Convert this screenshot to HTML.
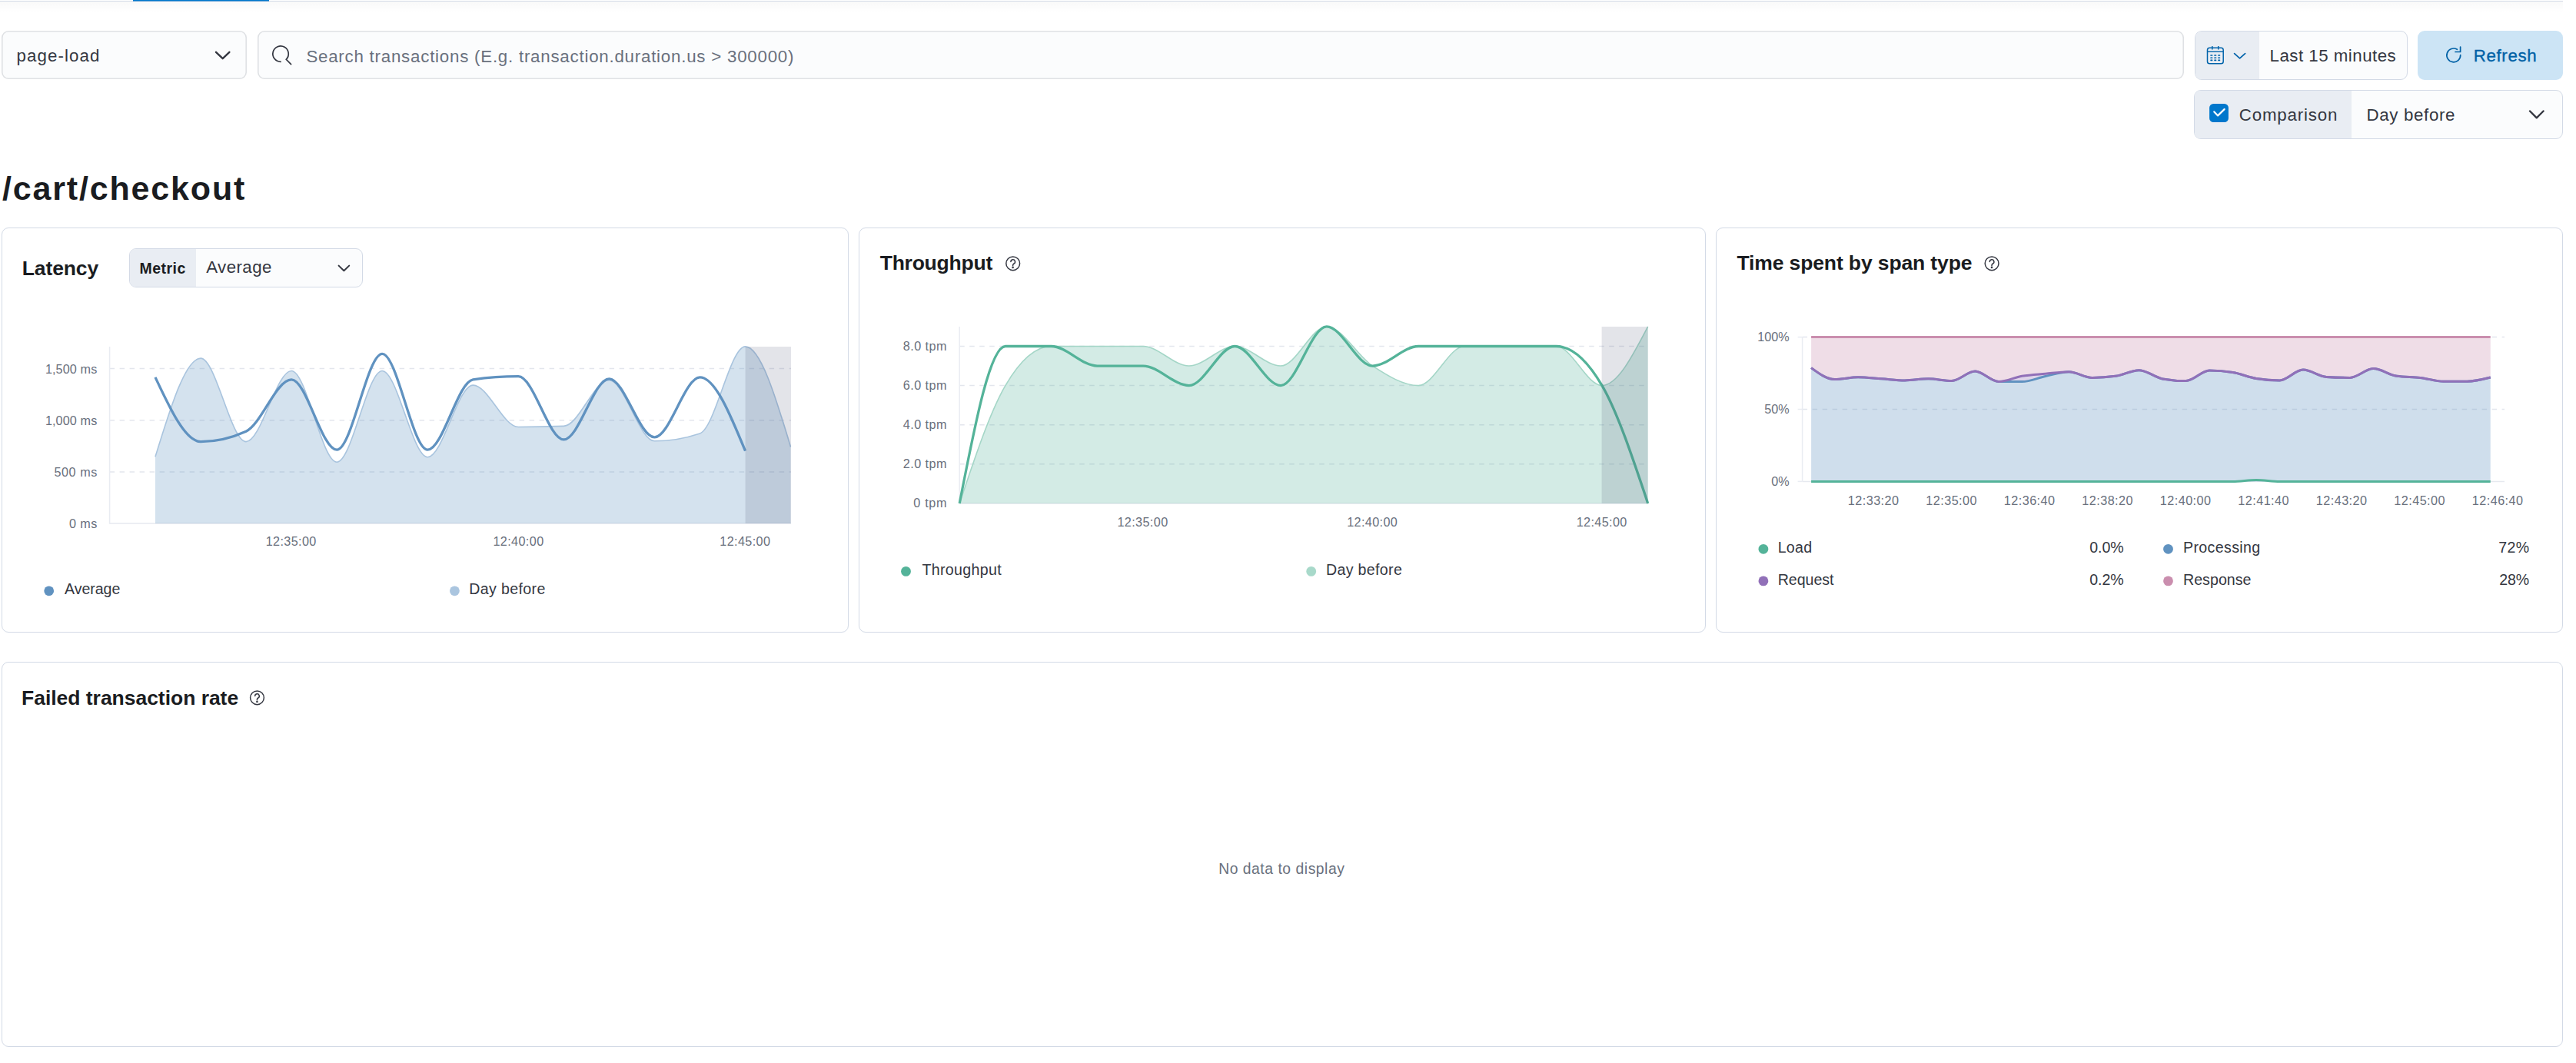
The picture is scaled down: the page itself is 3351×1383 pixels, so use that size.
<!DOCTYPE html>
<html><head><meta charset="utf-8"><title>/cart/checkout</title>
<style>
html,body{margin:0;padding:0;}
body{width:3351px;height:1383px;position:relative;overflow:hidden;background:#fff;font-family:"Liberation Sans",sans-serif;}
.t{position:absolute;white-space:nowrap;}
.b{position:absolute;box-sizing:border-box;}
.ctl{background:#FBFCFD;box-shadow:inset 0 0 0 1.6px rgba(40,46,60,0.13);border-radius:9px;}
.card{background:#fff;border:1px solid #D3DAE6;border-radius:9px;}
svg{position:absolute;left:0;top:0;}
</style></head><body>
<div class="b" style="left:0;top:2px;width:3334px;height:14px;background:linear-gradient(rgba(0,0,0,0.025),rgba(0,0,0,0));"></div>
<div class="b" style="left:0;top:1px;width:3334px;height:1px;background:#D3DAE6;"></div>
<div class="b" style="left:173px;top:0;width:177px;height:1px;background:#0077CC;"></div><div class="b" style="left:173px;top:1px;width:177px;height:1px;background:#5C9BD1;"></div>

<div class="b ctl" style="left:2px;top:40px;width:319px;height:63px;"></div>
<div class="b ctl" style="left:335px;top:40px;width:2506px;height:63px;"></div>

<div class="b" style="left:2855px;top:40px;width:277px;height:64px;border-radius:9px;background:#FBFCFD;border:1px solid #D3DAE6;overflow:hidden;">
  <div class="b" style="left:0;top:0;width:83px;height:62px;background:#E9EDF3;"></div>
</div>
<div class="b" style="left:3145px;top:40px;width:189px;height:64px;border-radius:9px;background:#CCE4F5;"></div>
<div class="b" style="left:2854px;top:117px;width:480px;height:64px;border-radius:9px;background:#FBFCFD;border:1px solid #D3DAE6;overflow:hidden;">
  <div class="b" style="left:0;top:0;width:204px;height:62px;background:#E9EDF3;"></div>
</div>

<div class="b card" style="left:2px;top:296px;width:1102px;height:527px;"></div>
<div class="b card" style="left:1117px;top:296px;width:1102px;height:527px;"></div>
<div class="b card" style="left:2232px;top:296px;width:1102px;height:527px;"></div>
<div class="b card" style="left:2px;top:861px;width:3332px;height:501px;"></div>

<div class="b" style="left:168px;top:323px;width:304px;height:51px;border-radius:9px;background:#FBFCFD;border:1px solid #D3DAE6;overflow:hidden;">
  <div class="b" style="left:0;top:0;width:86px;height:49px;background:#E9EDF3;"></div>
</div>

<svg width="3351" height="1383" viewBox="0 0 3351 1383">
<line x1="142.6" y1="479.5" x2="1029" y2="479.5" stroke="#E3E6ED" stroke-width="1.5" stroke-dasharray="6.5 6.5" stroke-linecap="butt"/>
<line x1="142.6" y1="546.8" x2="1029" y2="546.8" stroke="#E3E6ED" stroke-width="1.5" stroke-dasharray="6.5 6.5" stroke-linecap="butt"/>
<line x1="142.6" y1="613.9" x2="1029" y2="613.9" stroke="#E3E6ED" stroke-width="1.5" stroke-dasharray="6.5 6.5" stroke-linecap="butt"/>
<line x1="142.6" y1="681.0" x2="1029" y2="681.0" stroke="#E6E9EF" stroke-width="1.5" stroke-linecap="butt"/>
<line x1="142.6" y1="451" x2="142.6" y2="681.75" stroke="#E9ECF2" stroke-width="1.5" stroke-linecap="butt"/>
<path d="M202.00,594.30C221.68,530.20 241.36,466.10 261.04,466.10C280.72,466.10 300.40,574.60 320.08,574.60C339.76,574.60 359.44,482.50 379.12,482.50C398.80,482.50 418.48,601.20 438.16,601.20C457.84,601.20 477.52,482.50 497.20,482.50C516.88,482.50 536.56,594.70 556.24,594.70C575.92,594.70 595.60,501.10 615.28,501.10C634.96,501.10 654.64,555.50 674.32,555.50C694.00,555.50 713.68,555.13 733.36,554.40C753.04,553.67 772.72,494.70 792.40,494.70C812.08,494.70 831.76,573.80 851.44,573.80C871.12,573.80 890.80,570.50 910.48,563.90C930.16,557.30 949.84,450.90 969.52,450.90C989.20,450.90 1008.88,516.15 1028.56,581.40L1028.56,681.0L202.0,681.0Z" fill="#6092C0" fill-opacity="0.27"/>
<path d="M202.00,594.30C221.68,530.20 241.36,466.10 261.04,466.10C280.72,466.10 300.40,574.60 320.08,574.60C339.76,574.60 359.44,482.50 379.12,482.50C398.80,482.50 418.48,601.20 438.16,601.20C457.84,601.20 477.52,482.50 497.20,482.50C516.88,482.50 536.56,594.70 556.24,594.70C575.92,594.70 595.60,501.10 615.28,501.10C634.96,501.10 654.64,555.50 674.32,555.50C694.00,555.50 713.68,555.13 733.36,554.40C753.04,553.67 772.72,494.70 792.40,494.70C812.08,494.70 831.76,573.80 851.44,573.80C871.12,573.80 890.80,570.50 910.48,563.90C930.16,557.30 949.84,450.90 969.52,450.90C989.20,450.90 1008.88,516.15 1028.56,581.40" fill="none" stroke="#A9C4DE" stroke-width="1.6"/>
<path d="M202.00,490.90C221.68,532.75 241.36,574.60 261.04,574.60C280.72,574.60 300.40,570.13 320.08,561.20C339.76,552.27 359.44,493.90 379.12,493.90C398.80,493.90 418.48,585.20 438.16,585.20C457.84,585.20 477.52,460.40 497.20,460.40C516.88,460.40 536.56,585.20 556.24,585.20C575.92,585.20 595.60,496.70 615.28,493.90C634.96,491.10 654.64,489.70 674.32,489.70C694.00,489.70 713.68,571.90 733.36,571.90C753.04,571.90 772.72,492.80 792.40,492.80C812.08,492.80 831.76,568.90 851.44,568.90C871.12,568.90 890.80,490.90 910.48,490.90C930.16,490.90 949.84,538.80 969.52,586.70" fill="none" stroke="#6092C0" stroke-width="3.3" stroke-linejoin="round"/>
<rect x="969.6" y="451" width="59.4" height="230.0" fill="rgba(60,64,100,0.14)"/>
<line x1="1248.2" y1="450.5" x2="2143.7" y2="450.5" stroke="#E3E6ED" stroke-width="1.5" stroke-dasharray="6.5 6.5" stroke-linecap="butt"/>
<line x1="1248.2" y1="501.6" x2="2143.7" y2="501.6" stroke="#E3E6ED" stroke-width="1.5" stroke-dasharray="6.5 6.5" stroke-linecap="butt"/>
<line x1="1248.2" y1="552.7" x2="2143.7" y2="552.7" stroke="#E3E6ED" stroke-width="1.5" stroke-dasharray="6.5 6.5" stroke-linecap="butt"/>
<line x1="1248.2" y1="603.8" x2="2143.7" y2="603.8" stroke="#E3E6ED" stroke-width="1.5" stroke-dasharray="6.5 6.5" stroke-linecap="butt"/>
<line x1="1248.2" y1="654.9" x2="2143.7" y2="654.9" stroke="#E6E9EF" stroke-width="1.5" stroke-linecap="butt"/>
<line x1="1248.2" y1="425.0" x2="1248.2" y2="655.65" stroke="#E9ECF2" stroke-width="1.5" stroke-linecap="butt"/>
<path d="M1248.20,654.90C1268.10,595.28 1288.00,535.67 1307.90,501.60C1327.80,467.53 1347.70,450.50 1367.60,450.50C1387.50,450.50 1407.40,450.50 1427.30,450.50C1447.20,450.50 1467.10,450.50 1487.00,450.50C1506.90,450.50 1526.80,476.05 1546.70,476.05C1566.60,476.05 1586.50,450.50 1606.40,450.50C1626.30,450.50 1646.20,476.05 1666.10,476.05C1686.00,476.05 1705.90,424.95 1725.80,424.95C1745.70,424.95 1765.60,463.28 1785.50,476.05C1805.40,488.83 1825.30,501.60 1845.20,501.60C1865.10,501.60 1885.00,450.50 1904.90,450.50C1924.80,450.50 1944.70,450.50 1964.60,450.50C1984.50,450.50 2004.40,450.50 2024.30,450.50C2044.20,450.50 2064.10,501.60 2084.00,501.60C2103.90,501.60 2123.80,463.27 2143.70,424.95L2143.7,654.9L1248.2,654.9Z" fill="#54B399" fill-opacity="0.26"/>
<path d="M1248.20,654.90C1268.10,595.28 1288.00,535.67 1307.90,501.60C1327.80,467.53 1347.70,450.50 1367.60,450.50C1387.50,450.50 1407.40,450.50 1427.30,450.50C1447.20,450.50 1467.10,450.50 1487.00,450.50C1506.90,450.50 1526.80,476.05 1546.70,476.05C1566.60,476.05 1586.50,450.50 1606.40,450.50C1626.30,450.50 1646.20,476.05 1666.10,476.05C1686.00,476.05 1705.90,424.95 1725.80,424.95C1745.70,424.95 1765.60,463.28 1785.50,476.05C1805.40,488.83 1825.30,501.60 1845.20,501.60C1865.10,501.60 1885.00,450.50 1904.90,450.50C1924.80,450.50 1944.70,450.50 1964.60,450.50C1984.50,450.50 2004.40,450.50 2024.30,450.50C2044.20,450.50 2064.10,501.60 2084.00,501.60C2103.90,501.60 2123.80,463.27 2143.70,424.95" fill="none" stroke="#A4D6C7" stroke-width="1.6"/>
<path d="M1248.20,654.90C1268.10,552.70 1288.00,450.50 1307.90,450.50C1327.80,450.50 1347.70,450.50 1367.60,450.50C1387.50,450.50 1407.40,476.05 1427.30,476.05C1447.20,476.05 1467.10,476.05 1487.00,476.05C1506.90,476.05 1526.80,501.60 1546.70,501.60C1566.60,501.60 1586.50,450.50 1606.40,450.50C1626.30,450.50 1646.20,501.60 1666.10,501.60C1686.00,501.60 1705.90,424.95 1725.80,424.95C1745.70,424.95 1765.60,476.05 1785.50,476.05C1805.40,476.05 1825.30,450.50 1845.20,450.50C1865.10,450.50 1885.00,450.50 1904.90,450.50C1924.80,450.50 1944.70,450.50 1964.60,450.50C1984.50,450.50 2004.40,450.50 2024.30,450.50C2044.20,450.50 2064.10,467.53 2084.00,501.60C2103.90,535.67 2123.80,595.28 2143.70,654.90" fill="none" stroke="#54B399" stroke-width="3.3" stroke-linejoin="round"/>
<rect x="2083.6" y="425.0" width="60.1" height="229.89999999999998" fill="rgba(60,64,100,0.14)"/>
<line x1="2344.6" y1="438.6" x2="3258" y2="438.6" stroke="#E3E6ED" stroke-width="1.5" stroke-dasharray="6.5 6.5" stroke-linecap="butt"/>
<line x1="2344.6" y1="532.5" x2="3258" y2="532.5" stroke="#E3E6ED" stroke-width="1.5" stroke-dasharray="6.5 6.5" stroke-linecap="butt"/>
<line x1="2344.6" y1="626.4" x2="3258" y2="626.4" stroke="#E6E9EF" stroke-width="1.5" stroke-linecap="butt"/>
<line x1="2344.6" y1="438.6" x2="2344.6" y2="626.4" stroke="#E9ECF2" stroke-width="1.5" stroke-linecap="butt"/>
<line x1="2338.6" y1="438.6" x2="2344.6" y2="438.6" stroke="#E9ECF2" stroke-width="1.5" stroke-linecap="butt"/>
<line x1="2338.6" y1="532.5" x2="2344.6" y2="532.5" stroke="#E9ECF2" stroke-width="1.5" stroke-linecap="butt"/>
<line x1="2338.6" y1="626.4" x2="2344.6" y2="626.4" stroke="#E9ECF2" stroke-width="1.5" stroke-linecap="butt"/>
<path d="M2356.1,438.6L3239.73,438.6L3239.73,491.00C3229.57,493.60 3219.42,496.20 3209.26,496.20C3199.10,496.20 3188.95,496.20 3178.79,496.20C3168.63,496.20 3158.48,492.55 3148.32,491.40C3138.16,490.25 3128.01,490.70 3117.85,489.30C3107.69,487.90 3097.54,479.60 3087.38,479.60C3077.22,479.60 3067.07,491.40 3056.91,491.40C3046.75,491.40 3036.60,491.07 3026.44,490.40C3016.28,489.73 3006.13,481.10 2995.97,481.10C2985.81,481.10 2975.66,494.90 2965.50,494.90C2955.34,494.90 2945.19,494.07 2935.03,492.40C2924.87,490.73 2914.72,486.27 2904.56,484.60C2894.40,482.93 2884.25,482.10 2874.09,482.10C2863.93,482.10 2853.78,495.60 2843.62,495.60C2833.46,495.60 2823.31,494.70 2813.15,492.90C2802.99,491.10 2792.84,481.70 2782.68,481.70C2772.52,481.70 2762.37,487.90 2752.21,489.30C2742.05,490.70 2731.90,491.40 2721.74,491.40C2711.58,491.40 2701.43,483.70 2691.27,483.70C2681.11,483.70 2670.96,485.27 2660.80,486.20C2650.64,487.13 2640.49,487.57 2630.33,489.30C2620.17,491.03 2610.02,496.60 2599.86,496.60C2589.70,496.60 2579.55,483.10 2569.39,483.10C2559.23,483.10 2549.08,495.50 2538.92,495.50C2528.76,495.50 2518.61,492.80 2508.45,492.80C2498.29,492.80 2488.14,494.90 2477.98,494.90C2467.82,494.90 2457.67,493.48 2447.51,492.80C2437.35,492.12 2427.20,490.80 2417.04,490.80C2406.88,490.80 2396.73,493.50 2386.57,493.50C2376.41,493.50 2366.26,486.05 2356.10,478.60Z" fill="#CA8EAE" fill-opacity="0.30"/>
<path d="M2356.10,478.60C2366.26,486.05 2376.41,493.50 2386.57,493.50C2396.73,493.50 2406.88,490.80 2417.04,490.80C2427.20,490.80 2437.35,492.12 2447.51,492.80C2457.67,493.48 2467.82,494.90 2477.98,494.90C2488.14,494.90 2498.29,492.80 2508.45,492.80C2518.61,492.80 2528.76,495.50 2538.92,495.50C2549.08,495.50 2559.23,483.10 2569.39,483.10C2579.55,483.10 2589.70,496.60 2599.86,496.60C2610.02,496.60 2620.17,491.03 2630.33,489.30C2640.49,487.57 2650.64,487.13 2660.80,486.20C2670.96,485.27 2681.11,483.70 2691.27,483.70C2701.43,483.70 2711.58,491.40 2721.74,491.40C2731.90,491.40 2742.05,490.70 2752.21,489.30C2762.37,487.90 2772.52,481.70 2782.68,481.70C2792.84,481.70 2802.99,491.10 2813.15,492.90C2823.31,494.70 2833.46,495.60 2843.62,495.60C2853.78,495.60 2863.93,482.10 2874.09,482.10C2884.25,482.10 2894.40,482.93 2904.56,484.60C2914.72,486.27 2924.87,490.73 2935.03,492.40C2945.19,494.07 2955.34,494.90 2965.50,494.90C2975.66,494.90 2985.81,481.10 2995.97,481.10C3006.13,481.10 3016.28,489.73 3026.44,490.40C3036.60,491.07 3046.75,491.40 3056.91,491.40C3067.07,491.40 3077.22,479.60 3087.38,479.60C3097.54,479.60 3107.69,487.90 3117.85,489.30C3128.01,490.70 3138.16,490.25 3148.32,491.40C3158.48,492.55 3168.63,496.20 3178.79,496.20C3188.95,496.20 3199.10,496.20 3209.26,496.20C3219.42,496.20 3229.57,493.60 3239.73,491.00L3239.73,491.00C3229.57,493.60 3219.42,496.20 3209.26,496.20C3199.10,496.20 3188.95,496.20 3178.79,496.20C3168.63,496.20 3158.48,492.55 3148.32,491.40C3138.16,490.25 3128.01,490.70 3117.85,489.30C3107.69,487.90 3097.54,479.60 3087.38,479.60C3077.22,479.60 3067.07,491.40 3056.91,491.40C3046.75,491.40 3036.60,491.07 3026.44,490.40C3016.28,489.73 3006.13,481.10 2995.97,481.10C2985.81,481.10 2975.66,494.90 2965.50,494.90C2955.34,494.90 2945.19,494.07 2935.03,492.40C2924.87,490.73 2914.72,486.27 2904.56,484.60C2894.40,482.93 2884.25,482.10 2874.09,482.10C2863.93,482.10 2853.78,495.60 2843.62,495.60C2833.46,495.60 2823.31,494.70 2813.15,492.90C2802.99,491.10 2792.84,481.70 2782.68,481.70C2772.52,481.70 2762.37,487.90 2752.21,489.30C2742.05,490.70 2731.90,491.40 2721.74,491.40C2711.58,491.40 2701.43,483.70 2691.27,483.70C2681.11,483.70 2670.96,487.35 2660.80,489.50C2650.64,491.65 2640.49,496.60 2630.33,496.60C2620.17,496.60 2610.02,496.60 2599.86,496.60C2589.70,496.60 2579.55,483.10 2569.39,483.10C2559.23,483.10 2549.08,495.50 2538.92,495.50C2528.76,495.50 2518.61,492.80 2508.45,492.80C2498.29,492.80 2488.14,494.90 2477.98,494.90C2467.82,494.90 2457.67,493.48 2447.51,492.80C2437.35,492.12 2427.20,490.80 2417.04,490.80C2406.88,490.80 2396.73,493.50 2386.57,493.50C2376.41,493.50 2366.26,486.05 2356.10,478.60Z" fill="#9170B8" fill-opacity="0.30"/>
<path d="M2356.10,478.60C2366.26,486.05 2376.41,493.50 2386.57,493.50C2396.73,493.50 2406.88,490.80 2417.04,490.80C2427.20,490.80 2437.35,492.12 2447.51,492.80C2457.67,493.48 2467.82,494.90 2477.98,494.90C2488.14,494.90 2498.29,492.80 2508.45,492.80C2518.61,492.80 2528.76,495.50 2538.92,495.50C2549.08,495.50 2559.23,483.10 2569.39,483.10C2579.55,483.10 2589.70,496.60 2599.86,496.60C2610.02,496.60 2620.17,496.60 2630.33,496.60C2640.49,496.60 2650.64,491.65 2660.80,489.50C2670.96,487.35 2681.11,483.70 2691.27,483.70C2701.43,483.70 2711.58,491.40 2721.74,491.40C2731.90,491.40 2742.05,490.70 2752.21,489.30C2762.37,487.90 2772.52,481.70 2782.68,481.70C2792.84,481.70 2802.99,491.10 2813.15,492.90C2823.31,494.70 2833.46,495.60 2843.62,495.60C2853.78,495.60 2863.93,482.10 2874.09,482.10C2884.25,482.10 2894.40,482.93 2904.56,484.60C2914.72,486.27 2924.87,490.73 2935.03,492.40C2945.19,494.07 2955.34,494.90 2965.50,494.90C2975.66,494.90 2985.81,481.10 2995.97,481.10C3006.13,481.10 3016.28,489.73 3026.44,490.40C3036.60,491.07 3046.75,491.40 3056.91,491.40C3067.07,491.40 3077.22,479.60 3087.38,479.60C3097.54,479.60 3107.69,487.90 3117.85,489.30C3128.01,490.70 3138.16,490.25 3148.32,491.40C3158.48,492.55 3168.63,496.20 3178.79,496.20C3188.95,496.20 3199.10,496.20 3209.26,496.20C3219.42,496.20 3229.57,493.60 3239.73,491.00L3239.73,626.4L2356.1,626.4Z" fill="#6092C0" fill-opacity="0.30"/>
<path d="M2356.1,438.6L3239.73,438.6" stroke="#CA8EAE" stroke-width="3"/>
<path d="M2356.10,478.60C2366.26,486.05 2376.41,493.50 2386.57,493.50C2396.73,493.50 2406.88,490.80 2417.04,490.80C2427.20,490.80 2437.35,492.12 2447.51,492.80C2457.67,493.48 2467.82,494.90 2477.98,494.90C2488.14,494.90 2498.29,492.80 2508.45,492.80C2518.61,492.80 2528.76,495.50 2538.92,495.50C2549.08,495.50 2559.23,483.10 2569.39,483.10C2579.55,483.10 2589.70,496.60 2599.86,496.60C2610.02,496.60 2620.17,496.60 2630.33,496.60C2640.49,496.60 2650.64,491.65 2660.80,489.50C2670.96,487.35 2681.11,483.70 2691.27,483.70C2701.43,483.70 2711.58,491.40 2721.74,491.40C2731.90,491.40 2742.05,490.70 2752.21,489.30C2762.37,487.90 2772.52,481.70 2782.68,481.70C2792.84,481.70 2802.99,491.10 2813.15,492.90C2823.31,494.70 2833.46,495.60 2843.62,495.60C2853.78,495.60 2863.93,482.10 2874.09,482.10C2884.25,482.10 2894.40,482.93 2904.56,484.60C2914.72,486.27 2924.87,490.73 2935.03,492.40C2945.19,494.07 2955.34,494.90 2965.50,494.90C2975.66,494.90 2985.81,481.10 2995.97,481.10C3006.13,481.10 3016.28,489.73 3026.44,490.40C3036.60,491.07 3046.75,491.40 3056.91,491.40C3067.07,491.40 3077.22,479.60 3087.38,479.60C3097.54,479.60 3107.69,487.90 3117.85,489.30C3128.01,490.70 3138.16,490.25 3148.32,491.40C3158.48,492.55 3168.63,496.20 3178.79,496.20C3188.95,496.20 3199.10,496.20 3209.26,496.20C3219.42,496.20 3229.57,493.60 3239.73,491.00" fill="none" stroke="#6092C0" stroke-width="3"/>
<path d="M2356.10,478.60C2366.26,486.05 2376.41,493.50 2386.57,493.50C2396.73,493.50 2406.88,490.80 2417.04,490.80C2427.20,490.80 2437.35,492.12 2447.51,492.80C2457.67,493.48 2467.82,494.90 2477.98,494.90C2488.14,494.90 2498.29,492.80 2508.45,492.80C2518.61,492.80 2528.76,495.50 2538.92,495.50C2549.08,495.50 2559.23,483.10 2569.39,483.10C2579.55,483.10 2589.70,496.60 2599.86,496.60C2610.02,496.60 2620.17,491.03 2630.33,489.30C2640.49,487.57 2650.64,487.13 2660.80,486.20C2670.96,485.27 2681.11,483.70 2691.27,483.70C2701.43,483.70 2711.58,491.40 2721.74,491.40C2731.90,491.40 2742.05,490.70 2752.21,489.30C2762.37,487.90 2772.52,481.70 2782.68,481.70C2792.84,481.70 2802.99,491.10 2813.15,492.90C2823.31,494.70 2833.46,495.60 2843.62,495.60C2853.78,495.60 2863.93,482.10 2874.09,482.10C2884.25,482.10 2894.40,482.93 2904.56,484.60C2914.72,486.27 2924.87,490.73 2935.03,492.40C2945.19,494.07 2955.34,494.90 2965.50,494.90C2975.66,494.90 2985.81,481.10 2995.97,481.10C3006.13,481.10 3016.28,489.73 3026.44,490.40C3036.60,491.07 3046.75,491.40 3056.91,491.40C3067.07,491.40 3077.22,479.60 3087.38,479.60C3097.54,479.60 3107.69,487.90 3117.85,489.30C3128.01,490.70 3138.16,490.25 3148.32,491.40C3158.48,492.55 3168.63,496.20 3178.79,496.20C3188.95,496.20 3199.10,496.20 3209.26,496.20C3219.42,496.20 3229.57,493.60 3239.73,491.00" fill="none" stroke="#9170B8" stroke-width="3"/>
<path d="M2356.10,626.40C2366.26,626.40 2376.41,626.40 2386.57,626.40C2396.73,626.40 2406.88,626.40 2417.04,626.40C2427.20,626.40 2437.35,626.40 2447.51,626.40C2457.67,626.40 2467.82,626.40 2477.98,626.40C2488.14,626.40 2498.29,626.40 2508.45,626.40C2518.61,626.40 2528.76,626.40 2538.92,626.40C2549.08,626.40 2559.23,626.40 2569.39,626.40C2579.55,626.40 2589.70,626.40 2599.86,626.40C2610.02,626.40 2620.17,626.40 2630.33,626.40C2640.49,626.40 2650.64,626.40 2660.80,626.40C2670.96,626.40 2681.11,626.40 2691.27,626.40C2701.43,626.40 2711.58,626.40 2721.74,626.40C2731.90,626.40 2742.05,626.40 2752.21,626.40C2762.37,626.40 2772.52,626.40 2782.68,626.40C2792.84,626.40 2802.99,626.40 2813.15,626.40C2823.31,626.40 2833.46,626.40 2843.62,626.40C2853.78,626.40 2863.93,626.40 2874.09,626.40C2884.25,626.40 2894.40,626.40 2904.56,626.40C2914.72,626.40 2924.87,624.40 2935.03,624.40C2945.19,624.40 2955.34,626.40 2965.50,626.40C2975.66,626.40 2985.81,626.40 2995.97,626.40C3006.13,626.40 3016.28,626.40 3026.44,626.40C3036.60,626.40 3046.75,626.40 3056.91,626.40C3067.07,626.40 3077.22,626.40 3087.38,626.40C3097.54,626.40 3107.69,626.40 3117.85,626.40C3128.01,626.40 3138.16,626.40 3148.32,626.40C3158.48,626.40 3168.63,626.40 3178.79,626.40C3188.95,626.40 3199.10,626.40 3209.26,626.40C3219.42,626.40 3229.57,626.40 3239.73,626.40" fill="none" stroke="#54B399" stroke-width="3"/>
<circle cx="63.7" cy="768.8" r="6.4" fill="#6092C0"/>
<circle cx="591.4" cy="768.8" r="6.4" fill="#AAC5DF"/>
<circle cx="1178.5" cy="743.4" r="6.4" fill="#54B399"/>
<circle cx="1705.7" cy="743.4" r="6.4" fill="#A8D9CA"/>
<circle cx="2293.9" cy="714.3" r="6.4" fill="#54B399"/>
<circle cx="2820.5" cy="714.3" r="6.4" fill="#6092C0"/>
<circle cx="2293.9" cy="755.9" r="6.4" fill="#9170B8"/>
<circle cx="2820.5" cy="755.9" r="6.4" fill="#CA8EAE"/>
<polyline points="281,67.8 289.7,76.2 298.4,67.8" fill="none" stroke="#343741" stroke-width="2.4" stroke-linecap="round" stroke-linejoin="round"/>
<polyline points="440.6,345.6 447.4,352.2 454.2,345.6" fill="none" stroke="#343741" stroke-width="2" stroke-linecap="round" stroke-linejoin="round"/>
<polyline points="3291,144.5 3299.8,153.3 3308.6,144.5" fill="none" stroke="#343741" stroke-width="2.4" stroke-linecap="round" stroke-linejoin="round"/>
<polyline points="2906.6,69.6 2913.6,75.9 2920.6,69.6" fill="none" stroke="#0063AA" stroke-width="1.7" stroke-linecap="round" stroke-linejoin="round"/>
<path d="M365.1,80.3 A10.2,10.2 0 1 1 372.3,77.3 L378.6,83.6" fill="none" stroke="#343741" stroke-width="1.7" stroke-linecap="round" stroke-linejoin="miter"/>
<rect x="2871.5" y="62.2" width="20.7" height="20.6" rx="2.8" fill="none" stroke="#0063AA" stroke-width="1.5"/>
<line x1="2871.5" y1="67.3" x2="2892.2" y2="67.3" stroke="#0063AA" stroke-width="1.4"/>
<line x1="2877.8" y1="60" x2="2877.8" y2="64.5" stroke="#0063AA" stroke-width="1.5"/>
<line x1="2885.7" y1="60" x2="2885.7" y2="64.5" stroke="#0063AA" stroke-width="1.5"/>
<rect x="2875.3" y="71.2" width="3.1" height="1.6" rx="0.6" fill="#0063AA"/>
<rect x="2880.2" y="71.2" width="3.1" height="1.6" rx="0.6" fill="#0063AA"/>
<rect x="2885.1" y="71.2" width="3.1" height="1.6" rx="0.6" fill="#0063AA"/>
<rect x="2875.3" y="74.4" width="3.1" height="1.6" rx="0.6" fill="#0063AA"/>
<rect x="2880.2" y="74.4" width="3.1" height="1.6" rx="0.6" fill="#0063AA"/>
<rect x="2885.1" y="74.4" width="3.1" height="1.6" rx="0.6" fill="#0063AA"/>
<rect x="2875.3" y="77.6" width="3.1" height="1.6" rx="0.6" fill="#0063AA"/>
<rect x="2880.2" y="77.6" width="3.1" height="1.6" rx="0.6" fill="#0063AA"/>
<rect x="2885.1" y="77.6" width="3.1" height="1.6" rx="0.6" fill="#0063AA"/>
<path d="M3196.4,64.3 A8.9,8.9 0 1 0 3200.7,71.6" fill="none" stroke="#0061A6" stroke-width="1.7" stroke-linecap="round"/>
<polyline points="3200.6,61 3200.6,67.5 3194,67.5" fill="none" stroke="#0061A6" stroke-width="1.7" stroke-linecap="round" stroke-linejoin="round"/>
<rect x="2874.1" y="135.1" width="24.8" height="24" rx="5.2" fill="#0077CC"/>
<polyline points="2880.3,145.4 2885.1,150.4 2893.6,142.1" fill="none" stroke="#fff" stroke-width="2.2" stroke-linecap="round" stroke-linejoin="round"/>
<circle cx="1317.7" cy="342.8" r="8.9" fill="none" stroke="#343741" stroke-width="1.5"/>
<path d="M1314.90,340.50 a2.8,2.8 0 1 1 4.1,2.5 c-0.9,0.5 -1.4,1.1 -1.4,2.1 v0.3" fill="none" stroke="#343741" stroke-width="1.5" stroke-linecap="round"/>
<circle cx="1317.60" cy="347.90" r="1.3" fill="#343741"/>
<circle cx="2591.1" cy="342.8" r="8.9" fill="none" stroke="#343741" stroke-width="1.5"/>
<path d="M2588.30,340.50 a2.8,2.8 0 1 1 4.1,2.5 c-0.9,0.5 -1.4,1.1 -1.4,2.1 v0.3" fill="none" stroke="#343741" stroke-width="1.5" stroke-linecap="round"/>
<circle cx="2591.00" cy="347.90" r="1.3" fill="#343741"/>
<circle cx="334.5" cy="907.8" r="8.9" fill="none" stroke="#343741" stroke-width="1.5"/>
<path d="M331.70,905.50 a2.8,2.8 0 1 1 4.1,2.5 c-0.9,0.5 -1.4,1.1 -1.4,2.1 v0.3" fill="none" stroke="#343741" stroke-width="1.5" stroke-linecap="round"/>
<circle cx="334.40" cy="912.90" r="1.3" fill="#343741"/>
</svg>
<div class="t" style="left:21.40px;top:62.02px;font-size:22.3px;line-height:22.3px;color:#343741;font-weight:400;letter-spacing:1.102px;">page-load</div>
<div class="t" style="left:398.40px;top:63.22px;font-size:22.3px;line-height:22.3px;color:#69707D;font-weight:400;letter-spacing:0.770px;">Search transactions (E.g. transaction.duration.us &gt; 300000)</div>
<div class="t" style="left:2952.50px;top:62.12px;font-size:22.3px;line-height:22.3px;color:#343741;font-weight:400;letter-spacing:0.489px;">Last 15 minutes</div>
<div class="t" style="left:3217.80px;top:61.62px;font-size:22.3px;line-height:22.3px;color:#0061A6;font-weight:400;letter-spacing:0.621px;-webkit-text-stroke:0.35px #0061A6;">Refresh</div>
<div class="t" style="left:2912.80px;top:139.42px;font-size:22.3px;line-height:22.3px;color:#343741;font-weight:400;letter-spacing:0.822px;">Comparison</div>
<div class="t" style="left:3078.60px;top:139.42px;font-size:22.3px;line-height:22.3px;color:#343741;font-weight:400;letter-spacing:0.637px;">Day before</div>
<div class="t" style="left:3.00px;top:223.80px;font-size:43px;line-height:43px;color:#1A1C21;font-weight:700;letter-spacing:1.828px;">/cart/checkout</div>
<div class="t" style="left:28.80px;top:335.67px;font-size:26.5px;line-height:26.5px;color:#1A1C21;font-weight:700;letter-spacing:-0.136px;">Latency</div>
<div class="t" style="left:181.50px;top:339.79px;font-size:19.5px;line-height:19.5px;color:#1A1C21;font-weight:700;letter-spacing:0.462px;">Metric</div>
<div class="t" style="left:268.20px;top:337.42px;font-size:22.3px;line-height:22.3px;color:#343741;font-weight:400;letter-spacing:0.426px;">Average</div>
<div class="t" style="left:1144.70px;top:328.97px;font-size:26.5px;line-height:26.5px;color:#1A1C21;font-weight:700;letter-spacing:-0.235px;">Throughput</div>
<div class="t" style="left:2259.50px;top:328.97px;font-size:26.5px;line-height:26.5px;color:#1A1C21;font-weight:700;letter-spacing:-0.128px;">Time spent by span type</div>
<div class="t" style="left:28.10px;top:894.97px;font-size:26.5px;line-height:26.5px;color:#1A1C21;font-weight:700;letter-spacing:-0.032px;">Failed transaction rate</div>
<div class="t" style="left:1585.20px;top:1120.76px;font-size:19.3px;line-height:19.3px;color:#69707D;font-weight:400;letter-spacing:0.547px;">No data to display</div>
<div class="t" style="left:58.90px;top:471.59px;font-size:16.2px;line-height:16.2px;color:#69707D;font-weight:400;letter-spacing:0.116px;">1,500 ms</div>
<div class="t" style="left:58.90px;top:538.89px;font-size:16.2px;line-height:16.2px;color:#69707D;font-weight:400;letter-spacing:0.116px;">1,000 ms</div>
<div class="t" style="left:70.50px;top:605.99px;font-size:16.2px;line-height:16.2px;color:#69707D;font-weight:400;letter-spacing:0.542px;">500 ms</div>
<div class="t" style="left:90.10px;top:673.09px;font-size:16.2px;line-height:16.2px;color:#69707D;font-weight:400;letter-spacing:0.372px;">0 ms</div>
<div class="t" style="left:345.65px;top:696.19px;font-size:16.2px;line-height:16.2px;color:#69707D;font-weight:400;letter-spacing:0.385px;">12:35:00</div>
<div class="t" style="left:641.45px;top:696.19px;font-size:16.2px;line-height:16.2px;color:#69707D;font-weight:400;letter-spacing:0.385px;">12:40:00</div>
<div class="t" style="left:936.25px;top:696.19px;font-size:16.2px;line-height:16.2px;color:#69707D;font-weight:400;letter-spacing:0.385px;">12:45:00</div>
<div class="t" style="left:1174.70px;top:441.79px;font-size:16.2px;line-height:16.2px;color:#69707D;font-weight:400;letter-spacing:0.483px;">8.0 tpm</div>
<div class="t" style="left:1174.70px;top:493.49px;font-size:16.2px;line-height:16.2px;color:#69707D;font-weight:400;letter-spacing:0.483px;">6.0 tpm</div>
<div class="t" style="left:1174.70px;top:544.39px;font-size:16.2px;line-height:16.2px;color:#69707D;font-weight:400;letter-spacing:0.483px;">4.0 tpm</div>
<div class="t" style="left:1174.70px;top:595.29px;font-size:16.2px;line-height:16.2px;color:#69707D;font-weight:400;letter-spacing:0.483px;">2.0 tpm</div>
<div class="t" style="left:1188.20px;top:646.09px;font-size:16.2px;line-height:16.2px;color:#69707D;font-weight:400;letter-spacing:0.725px;">0 tpm</div>
<div class="t" style="left:1453.45px;top:670.79px;font-size:16.2px;line-height:16.2px;color:#69707D;font-weight:400;letter-spacing:0.385px;">12:35:00</div>
<div class="t" style="left:1752.15px;top:670.79px;font-size:16.2px;line-height:16.2px;color:#69707D;font-weight:400;letter-spacing:0.385px;">12:40:00</div>
<div class="t" style="left:2050.65px;top:670.79px;font-size:16.2px;line-height:16.2px;color:#69707D;font-weight:400;letter-spacing:0.385px;">12:45:00</div>
<div class="t" style="left:2286.29px;top:430.09px;font-size:16.2px;line-height:16.2px;color:#69707D;font-weight:400;letter-spacing:0.000px;">100%</div>
<div class="t" style="left:2295.29px;top:524.09px;font-size:16.2px;line-height:16.2px;color:#69707D;font-weight:400;letter-spacing:0.000px;">50%</div>
<div class="t" style="left:2304.30px;top:618.09px;font-size:16.2px;line-height:16.2px;color:#69707D;font-weight:400;letter-spacing:0.000px;">0%</div>
<div class="t" style="left:2403.75px;top:642.79px;font-size:16.2px;line-height:16.2px;color:#69707D;font-weight:400;letter-spacing:0.470px;">12:33:20</div>
<div class="t" style="left:2505.25px;top:642.79px;font-size:16.2px;line-height:16.2px;color:#69707D;font-weight:400;letter-spacing:0.470px;">12:35:00</div>
<div class="t" style="left:2606.75px;top:642.79px;font-size:16.2px;line-height:16.2px;color:#69707D;font-weight:400;letter-spacing:0.470px;">12:36:40</div>
<div class="t" style="left:2708.25px;top:642.79px;font-size:16.2px;line-height:16.2px;color:#69707D;font-weight:400;letter-spacing:0.470px;">12:38:20</div>
<div class="t" style="left:2809.75px;top:642.79px;font-size:16.2px;line-height:16.2px;color:#69707D;font-weight:400;letter-spacing:0.470px;">12:40:00</div>
<div class="t" style="left:2911.25px;top:642.79px;font-size:16.2px;line-height:16.2px;color:#69707D;font-weight:400;letter-spacing:0.470px;">12:41:40</div>
<div class="t" style="left:3012.75px;top:642.79px;font-size:16.2px;line-height:16.2px;color:#69707D;font-weight:400;letter-spacing:0.470px;">12:43:20</div>
<div class="t" style="left:3114.25px;top:642.79px;font-size:16.2px;line-height:16.2px;color:#69707D;font-weight:400;letter-spacing:0.470px;">12:45:00</div>
<div class="t" style="left:3215.75px;top:642.79px;font-size:16.2px;line-height:16.2px;color:#69707D;font-weight:400;letter-spacing:0.470px;">12:46:40</div>
<div class="t" style="left:84.00px;top:757.31px;font-size:19.6px;line-height:19.6px;color:#343741;font-weight:400;letter-spacing:-0.055px;">Average</div>
<div class="t" style="left:610.20px;top:757.31px;font-size:19.6px;line-height:19.6px;color:#343741;font-weight:400;letter-spacing:0.372px;">Day before</div>
<div class="t" style="left:1199.40px;top:731.71px;font-size:19.6px;line-height:19.6px;color:#343741;font-weight:400;letter-spacing:0.336px;">Throughput</div>
<div class="t" style="left:1725.00px;top:731.71px;font-size:19.6px;line-height:19.6px;color:#343741;font-weight:400;letter-spacing:0.328px;">Day before</div>
<div class="t" style="left:2312.70px;top:702.91px;font-size:19.6px;line-height:19.6px;color:#343741;font-weight:400;letter-spacing:0.270px;">Load</div>
<div class="t" style="left:2718.30px;top:702.91px;font-size:19.6px;line-height:19.6px;color:#343741;font-weight:400;letter-spacing:-0.079px;">0.0%</div>
<div class="t" style="left:2840.00px;top:702.91px;font-size:19.6px;line-height:19.6px;color:#343741;font-weight:400;letter-spacing:0.363px;">Processing</div>
<div class="t" style="left:3250.30px;top:702.91px;font-size:19.6px;line-height:19.6px;color:#343741;font-weight:400;letter-spacing:0.303px;">72%</div>
<div class="t" style="left:2312.70px;top:744.61px;font-size:19.6px;line-height:19.6px;color:#343741;font-weight:400;letter-spacing:-0.023px;">Request</div>
<div class="t" style="left:2718.30px;top:744.61px;font-size:19.6px;line-height:19.6px;color:#343741;font-weight:400;letter-spacing:-0.079px;">0.2%</div>
<div class="t" style="left:2840.00px;top:744.61px;font-size:19.6px;line-height:19.6px;color:#343741;font-weight:400;letter-spacing:0.038px;">Response</div>
<div class="t" style="left:3251.30px;top:744.61px;font-size:19.6px;line-height:19.6px;color:#343741;font-weight:400;letter-spacing:-0.197px;">28%</div>
</body></html>
